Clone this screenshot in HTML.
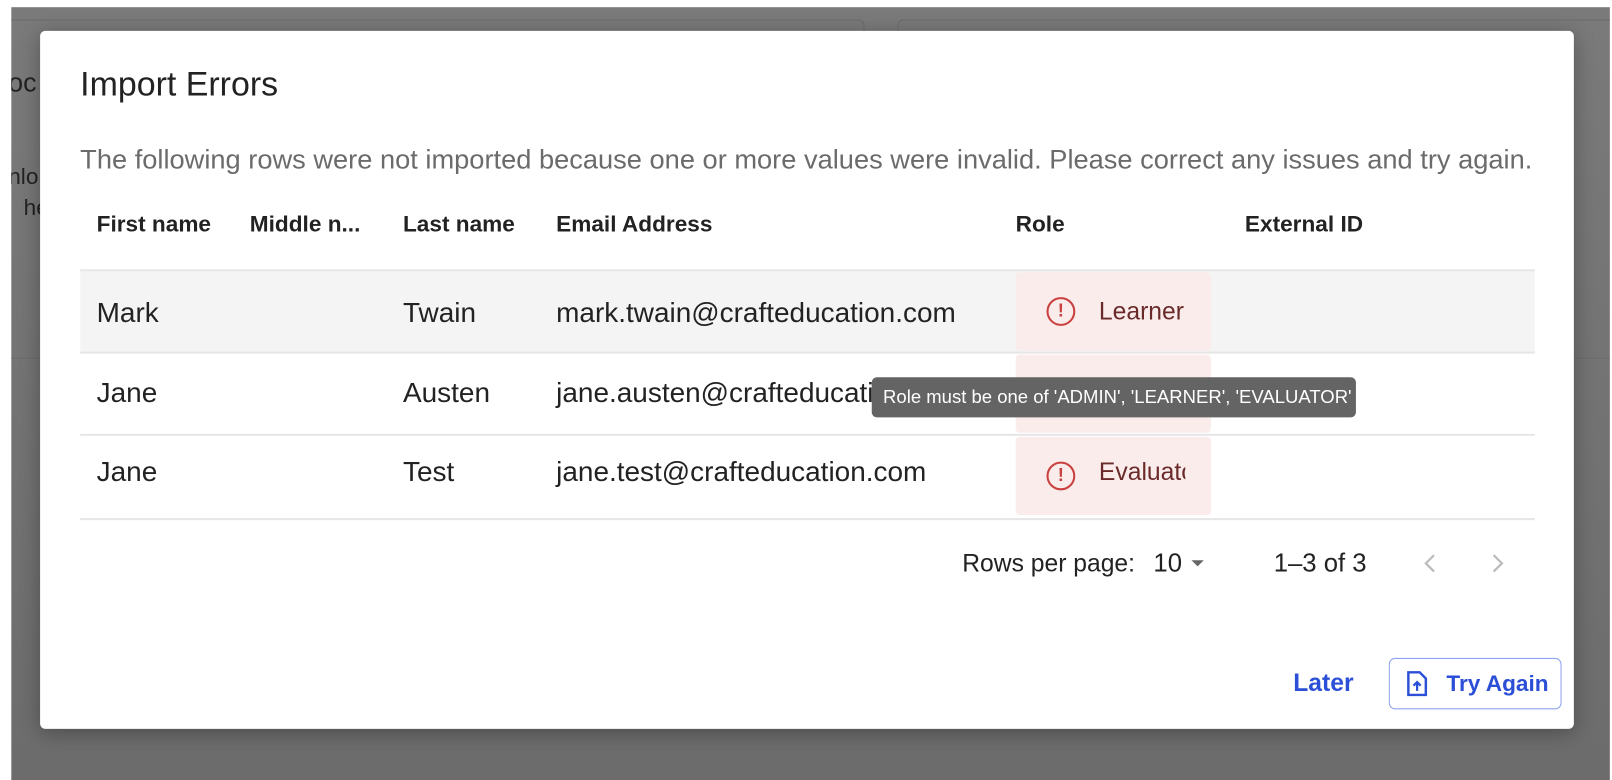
<!DOCTYPE html>
<html><head><meta charset="utf-8"><style>
*{margin:0;padding:0;box-sizing:border-box}
body{width:1612px;height:768px;background:#fff;position:relative;overflow:hidden;font-family:"Liberation Sans",Arial,sans-serif;}
#w{position:absolute;left:0;top:0;width:1568px;height:747px;transform:scale(1.028);transform-origin:0 0}
.bd{position:absolute;left:11px;top:7px;width:1555px;height:752px;background:linear-gradient(#7a7a7a,#6c6c6c);overflow:hidden}
.card{position:absolute;border:1px solid #6c6c6c;border-radius:6px;}
.dlg{position:absolute;left:39px;top:30px;width:1492px;height:679px;background:#fff;border-radius:5px;box-shadow:0 4px 20px rgba(0,0,0,.3);}
.a{position:absolute;white-space:nowrap}
.h{font-weight:bold;font-size:22px;color:#222;top:205px}
.c{font-size:27.2px;color:#222}
.line{position:absolute;left:78px;width:1415px;height:2px;background:#e6e6e6}
.err{position:absolute;left:988px;width:190px;background:#fbecec;border-radius:4px}
.ic{position:absolute;left:1018px;width:28px;height:28px;border:2.5px solid #c9403e;border-radius:50%;color:#c9403e;font-weight:bold;font-size:18px;text-align:center;line-height:23px}
.et{font-size:24px;color:#6a2a2a;left:1069px}
</style></head><body><div id="w">
<div class="bd">
<div class="card" style="left:-20px;top:12px;width:850px;height:330px"></div>
<div class="card" style="left:862px;top:12px;width:720px;height:330px"></div>
<div class="a" style="left:-3px;top:58px;font-size:26px;color:#222">oc</div>
<div class="a" style="left:-3px;top:152px;font-size:22px;color:#222">nlo</div>
<div class="a" style="left:12px;top:182px;font-size:22px;color:#222">he</div>
</div>
<div class="dlg"></div>
<div class="a" style="left:78px;top:63px;font-size:33px;color:#222">Import Errors</div>
<div class="a" style="left:78px;top:140px;font-size:26.5px;color:#6b6b6b">The following rows were not imported because one or more values were invalid. Please correct any issues and try again.</div>
<div class="a h" style="left:94px">First name</div>
<div class="a h" style="left:243px">Middle n...</div>
<div class="a h" style="left:392px">Last name</div>
<div class="a h" style="left:541px">Email Address</div>
<div class="a h" style="left:988px">Role</div>
<div class="a h" style="left:1211px">External ID</div>
<div style="position:absolute;left:78px;top:264px;width:1415px;height:78px;background:#f4f4f4"></div>
<div class="line" style="top:262px"></div>
<div class="line" style="top:342px"></div>
<div class="line" style="top:422px"></div>
<div class="line" style="top:504px"></div>
<div class="err" style="top:265px;height:76px"></div>
<div class="err" style="top:345px;height:76px"></div>
<div class="err" style="top:425px;height:76px"></div>
<div class="a c" style="left:94px;top:288px">Mark</div>
<div class="a c" style="left:392px;top:288px">Twain</div>
<div class="a c" style="left:541px;top:288px">mark.twain@crafteducation.com</div>
<div class="ic" style="top:289px">!</div><div class="a et" style="top:290px">Learner</div>
<div class="a c" style="left:94px;top:366px">Jane</div>
<div class="a c" style="left:392px;top:366px">Austen</div>
<div class="a c" style="left:541px;top:366px">jane.austen@crafteducati</div>
<div class="a c" style="left:94px;top:443px">Jane</div>
<div class="a c" style="left:392px;top:443px">Test</div>
<div class="a c" style="left:541px;top:443px">jane.test@crafteducation.com</div>
<div class="ic" style="top:449px">!</div><div class="a et" style="top:446px;width:84px;overflow:hidden">Evaluator</div>
<div class="a" style="left:848px;top:367px;width:471px;height:39px;background:#646464;border-radius:5px;color:#fff;font-size:18px;line-height:39px;padding-left:11px;overflow:hidden">Role must be one of 'ADMIN', 'LEARNER', 'EVALUATOR'</div>
<div class="a" style="left:936px;top:535px;font-size:24px;color:#222">Rows per page:</div>
<div class="a" style="left:1122px;top:534px;font-size:25px;color:#222">10</div>
<div class="a" style="left:1159px;top:545px;width:0;height:0;border-left:6px solid transparent;border-right:6px solid transparent;border-top:6px solid #666"></div>
<div class="a" style="left:1239px;top:534px;font-size:25px;color:#222">1–3 of 3</div>
<svg class="a" style="left:1380px;top:536px" width="100" height="24"><path d="M15 4l-8 8 8 8" stroke="#bbb" stroke-width="2.2" fill="none"/><path d="M73 4l8 8-8 8" stroke="#bbb" stroke-width="2.2" fill="none"/></svg>
<div class="a" style="left:1258px;top:651px;font-size:24px;color:#2b4fd6;font-weight:bold">Later</div>
<div class="a" style="left:1351px;top:640px;width:168px;height:50px;border:1.5px solid #8fa4ee;border-radius:6px"></div>
<svg class="a" style="left:1368px;top:652px" width="22" height="26"><path d="M2 2h11l6 6v16H2z" stroke="#2b4fd6" stroke-width="2.4" fill="none"/><path d="M10.5 20v-8M7 15l3.5-3.5L14 15" stroke="#2b4fd6" stroke-width="2.2" fill="none"/></svg>
<div class="a" style="left:1407px;top:652px;font-size:22px;color:#2b4fd6;font-weight:bold">Try Again</div>
</div></body></html>
